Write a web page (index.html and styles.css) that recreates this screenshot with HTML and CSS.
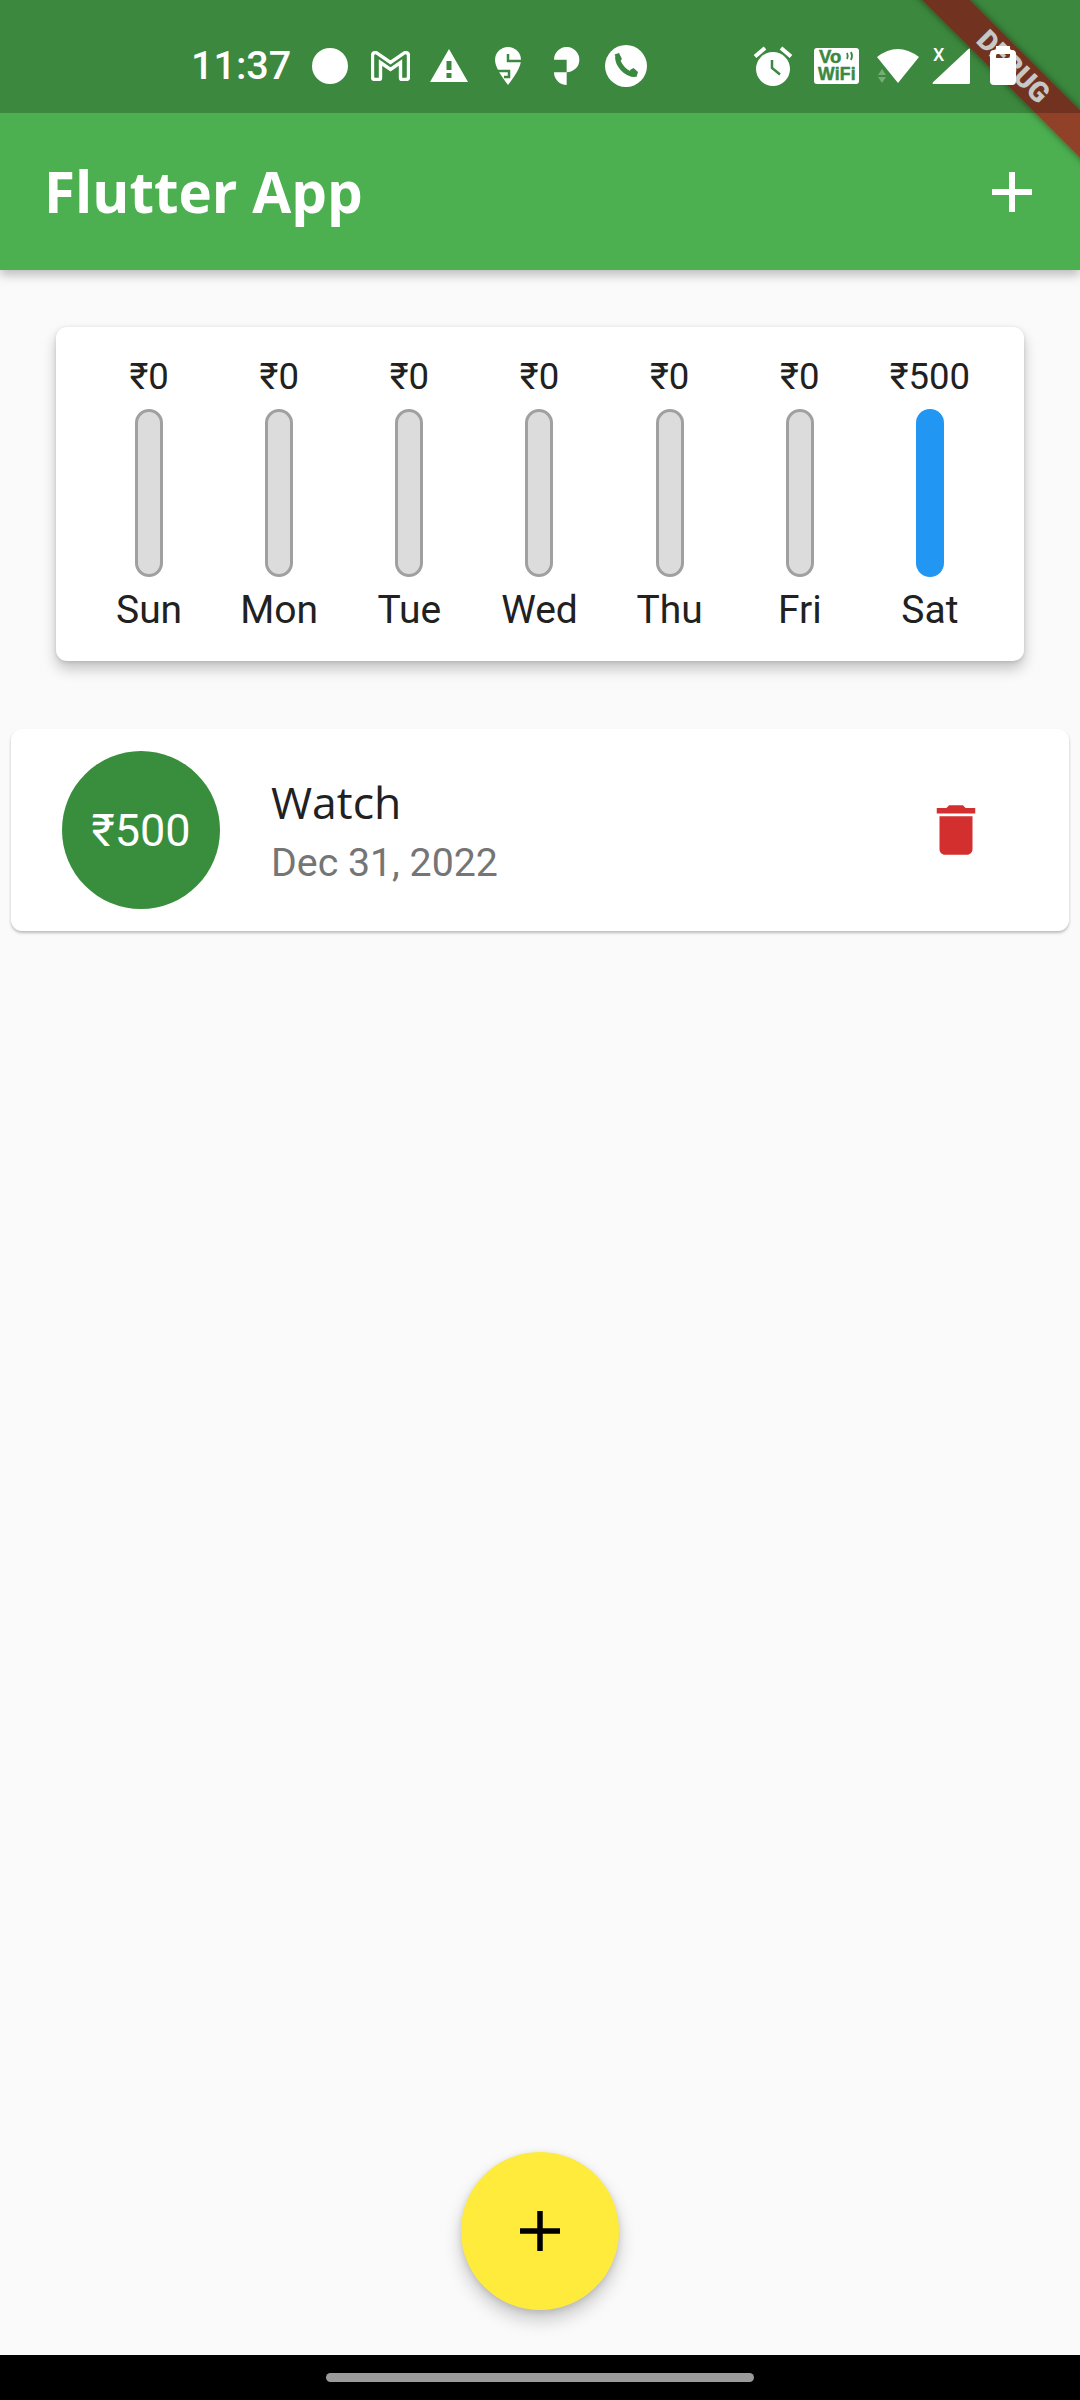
FILE: index.html
```html
<!DOCTYPE html>
<html lang="en">
<head>
<meta charset="utf-8">
<title>Flutter App</title>
<link rel="stylesheet" href="styles.css">
</head>
<body>
<div class="page">
  <header class="appbar">
    <h1 class="title">Flutter App</h1>
    <svg class="appbar-add" viewBox="0 0 40 40"><path d="M0 20H40M20 0V40"/></svg>
  </header>

  <div class="banner"><span class="banner-text">DEBUG</span></div>

  <div class="status">
    <span class="time">11:37</span>
    <svg class="ic ic-dot" viewBox="0 0 36 36"><circle cx="18" cy="18" r="18"/></svg>
    <svg class="ic ic-gmail" viewBox="0 0 39 30"><path class="line" d="M1.500 26V4.500C1.500 2 4 .8 6 2.200L19.500 11.500 33 2.200c2-1.400 4.500-.2 4.500 2.300V26c0 1.500-.8 2.500-2.500 2.500H31c-1 0-1.500-.5-1.500-1.500V11.500L19.500 18.500 9.500 11.500V27c0 1-.5 1.500-1.500 1.500H4c-1.700 0-2.500-1-2.500-2.500Z"/></svg>
    <svg class="ic ic-warn" viewBox="0 0 38 33"><path fill-rule="evenodd" d="M19 0 38 33H0ZM16.500 12V21H21.500V12ZM16.500 24V29H21.500V24Z"/></svg>
    <svg class="ic ic-swiggy" viewBox="0 0 26 38"><path d="M13 0A13 13 0 0 1 26 13C26 20 19 30 13 38 7 30 0 20 0 13A13 13 0 0 1 13 0Z"/><path class="cut" d="M13 7V14H26M3 24H14V30H9"/></svg>
    <svg class="ic ic-quad" viewBox="0 0 26 38"><path d="M0 12.670A12.670 12.670 0 1 1 12.670 25.330V12.670ZM0 25.330H12.670V38A12.670 12.670 0 0 1 0 25.330Z"/></svg>
    <svg class="ic ic-whatsapp" viewBox="0 0 42 42"><circle cx="21" cy="21" r="21"/><path class="cut cut-wide" d="M12.500 11.500C12.500 20 21 29.500 30 29.500"/><path class="cut-fill" d="M9.500 9.500 14 8 17 14 13.500 17.500ZM25 25 28.500 23 33 27 31.500 32 26 30.500Z"/></svg>

    <svg class="ic ic-alarm" viewBox="0 0 40 41"><circle cx="20" cy="24" r="17"/><path class="line line-thick" d="M2 11.500 12 3M28 3 38 11.500"/><path class="cut" d="M19 15V23L27 29.500"/></svg>
    <svg class="ic ic-vowifi" viewBox="0 -4 45 44"><rect width="45" height="36" rx="3"/><text class="vo" x="5" y="15">Vo</text><path class="cut cut-thin" d="M33 5Q34.500 8 33 11M37 4Q39 8 37 12"/><text class="wf" x="4" y="32">WiFi</text></svg>
    <svg class="ic ic-wifi" viewBox="0 0 42 36"><path d="M0 9Q20.500-7 42 9L21 35Z"/><path class="faint" d="M5 21 1 27H9ZM1 29H9L5 35Z"/></svg>
    <svg class="ic ic-signal" viewBox="0 -4 38 46"><path d="M37 1.500A1 1 0 0 1 38 2V35.500A1.500 1.500 0 0 1 36.500 37H1.500C.5 37 .3 36 1 35.200Z"/><text class="sx" x="1" y="14">X</text></svg>
    <svg class="ic ic-battery" viewBox="0 0 26 40"><path fill-rule="evenodd" d="M6 0H20V4H22A4 4 0 0 1 26 8V35A4 4 0 0 1 22 39H4A4 4 0 0 1 0 35V8A4 4 0 0 1 4 4H6ZM6 8V12H20V8Z"/></svg>
  </div>

  <main class="content">
    <section class="chart">
      <div class="day"><span class="amount">₹0</span><div class="bar"></div><span class="day-name">Sun</span></div>
      <div class="day"><span class="amount">₹0</span><div class="bar"></div><span class="day-name">Mon</span></div>
      <div class="day"><span class="amount">₹0</span><div class="bar"></div><span class="day-name">Tue</span></div>
      <div class="day"><span class="amount">₹0</span><div class="bar"></div><span class="day-name">Wed</span></div>
      <div class="day"><span class="amount">₹0</span><div class="bar"></div><span class="day-name">Thu</span></div>
      <div class="day"><span class="amount">₹0</span><div class="bar"></div><span class="day-name">Fri</span></div>
      <div class="day"><span class="amount">₹500</span><div class="bar bar-full"></div><span class="day-name">Sat</span></div>
    </section>

    <article class="expense">
      <div class="avatar">₹500</div>
      <div class="expense-text">
        <div class="expense-title">Watch</div>
        <div class="expense-date">Dec 31, 2022</div>
      </div>
      <svg class="trash" viewBox="0 0 24 24"><path d="M6 19c0 1.100.9 2 2 2h8c1.100 0 2-.9 2-2V7H6v12zM19 4h-3.500l-1-1h-5l-1 1H5v2h14V4z"/></svg>
    </article>
  </main>

  <button class="fab" type="button"><svg class="fab-plus" viewBox="0 0 40 40"><path d="M0 20H40M20 0V40"/></svg></button>

  <nav class="navbar"><div class="pill"></div></nav>
</div>
</body>
</html>
```

FILE: styles.css
```css
* { box-sizing: border-box; }
html, body { margin: 0; padding: 0; }
body { background: #fafafa; font-family: Roboto, "Liberation Sans", sans-serif; color: #212121; }

.page {
  position: relative;
  width: 1080px;
  height: 2400px;
  display: flex;
  flex-direction: column;
  overflow: hidden;
  background: #fafafa;
}

/* App bar */
.appbar {
  position: relative;
  flex: none;
  height: 270px;
  padding: 113px 48px 0 44px;
  display: flex;
  align-items: center;
  justify-content: space-between;
  background: #4caf50;
  box-shadow: 0 5px 10px rgba(0, 0, 0, .25);
}
.title {
  margin: 0;
  font: 700 56.500px/1.2 "Open Sans", sans-serif;
  color: #fff;
}
.appbar-add { width: 40px; height: 40px; }
.appbar-add path { fill: none; stroke: #fff; stroke-width: 6; }

/* Debug ribbon, between the app and the system bar */
.banner {
  position: absolute;
  top: 50px;
  left: 863px;
  width: 300px;
  height: 34px;
  display: flex;
  align-items: center;
  justify-content: center;
  transform: rotate(45deg);
  background: rgba(170, 28, 28, .75);
  box-shadow: 0 0 6px rgba(0, 0, 0, .5);
}
.banner-text {
  font: 900 28px/1 Roboto, sans-serif;
  color: #fff;
}

/* Status bar: a scrim over the app with icons on top */
.status {
  position: absolute;
  top: 0;
  left: 0;
  width: 1080px;
  height: 113px;
  padding: 18px 64px 0 191px;
  display: flex;
  align-items: center;
  background: rgba(0, 0, 0, .22);
}
.time { font: 500 39.500px/1 Roboto, sans-serif; color: #fff; width: 97px; }
.ic { display: block; fill: #fff; flex: none; }
.ic .line { fill: none; stroke: #fff; stroke-width: 3.400; }
.ic .line-thick { stroke-width: 4; }
.ic .cut { fill: none; stroke: #3b8840; stroke-width: 2.500; }
.ic .cut-wide { stroke-width: 5; }
.ic .cut-thin { stroke-width: 1.800; }
.ic .cut-fill { fill: #3b8840; }
.ic .faint { fill: #fff; opacity: .3; }
.vo, .wf { font-family: "Liberation Sans", sans-serif; font-weight: 700; fill: #3b8840; stroke: #3b8840; stroke-width: .5; }
.vo { font-size: 18.500px; }
.wf { font-size: 17.500px; letter-spacing: .3px; }
.sx { font: 500 18px Roboto, sans-serif; fill: #fff; }

.ic-dot { width: 36px; height: 36px; margin-left: 24px; }
.ic-gmail { width: 39px; height: 30px; margin-left: 23px; }
.ic-warn { width: 38px; height: 33px; margin-left: 20px; }
.ic-swiggy { width: 26px; height: 38px; margin-left: 27px; }
.ic-quad { width: 26px; height: 38px; margin-left: 33px; }
.ic-whatsapp { width: 42px; height: 42px; margin-left: 25px; }
.ic-alarm { width: 40px; height: 41px; margin-left: 106px; }
.ic-vowifi { width: 45px; height: 44px; margin-left: 21px; }
.ic-wifi { width: 42px; height: 36px; margin-left: 18px; }
.ic-signal { width: 38px; height: 46px; margin-left: 13px; }
.ic-battery { width: 26px; height: 40px; margin-left: 20px; }

/* Content */
.content { flex: 1; display: flex; flex-direction: column; min-height: 0; }

.chart {
  margin: 57px 56px 0;
  height: 334px;
  padding: 30px 29px 0 28px;
  display: grid;
  grid-template-columns: repeat(7, 1fr);
  background: #fff;
  border-radius: 11px;
  box-shadow: 0 8px 14px rgba(0, 0, 0, .22), 0 1px 4px rgba(0, 0, 0, .12);
}
.day { display: flex; flex-direction: column; align-items: center; }
.amount { font-size: 36.500px; line-height: 39px; white-space: nowrap; }
.bar {
  width: 28px;
  height: 168px;
  margin: 13px 0 11px;
  border: 3px solid #a0a0a0;
  border-radius: 14px;
  background: #dcdcdc;
}
.bar-full { border: 0; background: #2196f3; }
.day-name { font-size: 39px; line-height: 45px; }

.expense {
  margin: 68px 11px 0;
  height: 202px;
  padding: 0 80px 0 51px;
  display: flex;
  align-items: center;
  background: #fff;
  border-radius: 11px;
  box-shadow: 0 2px 3px rgba(0, 0, 0, .25);
}
.avatar {
  width: 158px;
  height: 158px;
  flex: none;
  display: flex;
  align-items: center;
  justify-content: center;
  border-radius: 50%;
  background: #388e3c;
  color: #fff;
  font-size: 45px;
}
.expense-text { flex: 1; margin-left: 51px; padding-bottom: 3px; display: flex; flex-direction: column; gap: 9px; }
.expense-title { font: 400 44.500px/60px "Open Sans", sans-serif; }
.expense-date { font-size: 39.300px; line-height: 45px; color: #757575; }
.trash { width: 66px; height: 66px; fill: #d32f2f; }

/* FAB */
.fab {
  position: absolute;
  left: 461px;
  top: 2152px;
  width: 158px;
  height: 158px;
  padding: 0;
  display: flex;
  align-items: center;
  justify-content: center;
  border: 0;
  border-radius: 50%;
  background: #ffeb3b;
  box-shadow: 0 10px 18px rgba(0, 0, 0, .2), 0 2px 6px rgba(0, 0, 0, .12);
}
.fab-plus { width: 40px; height: 40px; }
.fab-plus path { fill: none; stroke: #000; stroke-width: 5.500; }

/* Navigation bar */
.navbar {
  flex: none;
  height: 45px;
  padding-top: 18px;
  display: flex;
  justify-content: center;
  background: #000;
}
.pill { width: 428px; height: 9px; border-radius: 5px; background: #9b9b9b; }
```
